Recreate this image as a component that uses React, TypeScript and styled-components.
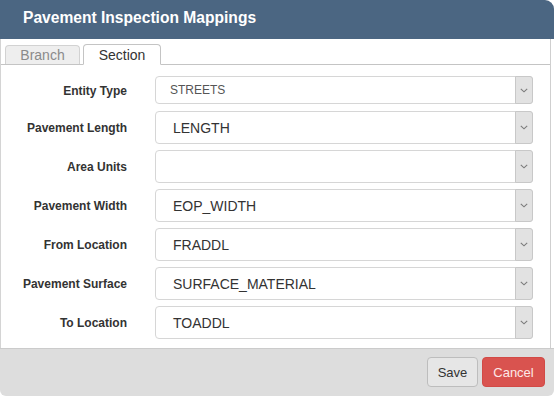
import React from 'react';
import styled, { createGlobalStyle } from 'styled-components';

const GlobalStyle = createGlobalStyle`
  html, body {
    margin: 0;
    padding: 0;
    background: #fff;
    font-family: "Liberation Sans", Arial, sans-serif;
  }
`;

interface Mapping {
  label: string;
  value: string;
  small?: boolean;
}

const mappings: Mapping[] = [
  { label: 'Entity Type', value: 'STREETS', small: true },
  { label: 'Pavement Length', value: 'LENGTH' },
  { label: 'Area Units', value: '' },
  { label: 'Pavement Width', value: 'EOP_WIDTH' },
  { label: 'From Location', value: 'FRADDL' },
  { label: 'Pavement Surface', value: 'SURFACE_MATERIAL' },
  { label: 'To Location', value: 'TOADDL' },
];

const Chevron = () => (
  <svg width="8" height="5" viewBox="0 0 8 5">
    <path d="M0.8 0.8 L4 3.8 L7.2 0.8" fill="none" stroke="#7a7a7a" strokeWidth="1.1" />
  </svg>
);

const App: React.FC = () => {
  return (
    <>
      <GlobalStyle />
      <Dialog>
        <Header>Pavement Inspection Mappings</Header>
        <Body>
          <TabBar>
            <Tab>Branch</Tab>
            <Tab active>Section</Tab>
          </TabBar>
          <Form>
            {mappings.map(m => (
              <React.Fragment key={m.label}>
                <Label>{m.label}</Label>
                <Select small={m.small}>
                  <SelectValue small={m.small}>{m.value}</SelectValue>
                  <ArrowButton>
                    <Chevron />
                  </ArrowButton>
                </Select>
              </React.Fragment>
            ))}
          </Form>
        </Body>
        <Footer>
          <Button width={51}>Save</Button>
          <Button width={63} danger>Cancel</Button>
        </Footer>
      </Dialog>
    </>
  );
};

const Dialog = styled.div`
  width: 554px;
  height: 396px;
  display: flex;
  flex-direction: column;
  box-sizing: border-box;
`;

const Header = styled.div`
  height: 39px;
  flex-shrink: 0;
  box-sizing: border-box;
  background: #4b6682;
  color: #fff;
  font-size: 15.6px;
  font-weight: bold;
  padding: 9px 0 0 23px;
  border-top-right-radius: 9px;
`;

const Body = styled.div`
  flex: 1;
  border-left: 1px solid #d4d4d4;
  border-right: 1px solid #cfcfcf;
  margin-right: 3px;
  display: flex;
  flex-direction: column;
`;

const TabBar = styled.div`
  display: flex;
  align-items: flex-end;
  gap: 3px;
  height: 26px;
  padding-left: 4px;
  box-sizing: border-box;
  border-bottom: 1px solid #c4c4c4;
`;

const Tab = styled.div<{ active?: boolean }>`
  height: ${p => (p.active ? '21px' : '19px')};
  margin-bottom: ${p => (p.active ? '-1px' : '0')};
  box-sizing: border-box;
  width: ${p => (p.active ? '78px' : '75px')};
  display: flex;
  align-items: center;
  justify-content: center;
  font-size: 14px;
  color: ${p => (p.active ? '#333' : '#8a8a8a')};
  background: ${p => (p.active ? '#fff' : '#eeeeee')};
  border: 1px solid ${p => (p.active ? '#c4c4c4' : '#d2d2d2')};
  border-bottom: ${p => (p.active ? '1px solid #fff' : 'none')};
  border-radius: 4px 4px 0 0;
`;

const Form = styled.div`
  display: grid;
  grid-template-columns: 126px 1fr;
  column-gap: 28px;
  row-gap: 6px;
  padding: 11px 17px 8px 0;
  align-items: center;
`;

const Label = styled.div`
  text-align: right;
  font-size: 12px;
  font-weight: bold;
  color: #333;
`;

const Select = styled.div<{ small?: boolean }>`
  height: ${p => (p.small ? '28px' : '33px')};
  margin-bottom: ${p => (p.small ? '1px' : '0')};
  display: flex;
  box-sizing: border-box;
  border: 1px solid #d6d6d6;
  border-radius: 4px;
  background: #fff;
`;

const SelectValue = styled.div<{ small?: boolean }>`
  flex: 1;
  display: flex;
  align-items: center;
  padding-left: ${p => (p.small ? '14px' : '17px')};
  font-size: ${p => (p.small ? '12px' : '14px')};
  color: ${p => (p.small ? '#555' : '#333')};
`;

const ArrowButton = styled.div`
  width: 16px;
  display: flex;
  align-items: center;
  justify-content: center;
  background: #e2e2e2;
  border: 1px solid #c8c8c8;
  border-radius: 0 3px 3px 0;
  margin: -1px -1px -1px 0;
`;

const Footer = styled.div`
  height: 48px;
  flex-shrink: 0;
  box-sizing: border-box;
  background: #dddddd;
  border-top: 1px solid #cbcbcb;
  border-bottom-left-radius: 6px;
  border-bottom-right-radius: 6px;
  display: flex;
  justify-content: flex-end;
  align-items: flex-start;
  gap: 4px;
  padding: 8px 9px 0 0;
`;

const Button = styled.button<{ danger?: boolean; width: number }>`
  width: ${p => p.width}px;
  height: 30px;
  box-sizing: border-box;
  padding: 0;
  font-family: "Liberation Sans", Arial, sans-serif;
  font-size: 13px;
  border-radius: 4px;
  color: ${p => (p.danger ? '#fde8e8' : '#333')};
  background: ${p => (p.danger ? '#d9534f' : '#e6e6e6')};
  border: 1px solid ${p => (p.danger ? '#d24a46' : '#bdbdbd')};
  cursor: pointer;
`;

export default App;
